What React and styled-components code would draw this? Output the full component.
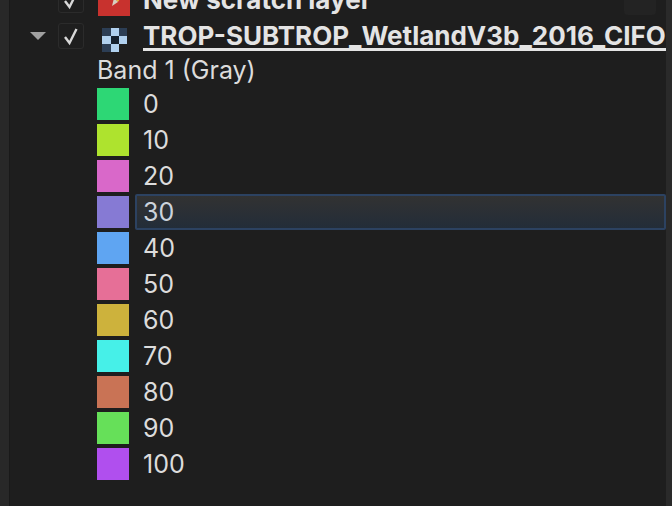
import React from 'react';
import styled, { createGlobalStyle } from 'styled-components';

const GlobalStyle = createGlobalStyle`
  html, body {
    margin: 0;
    padding: 0;
    background: #1e1e1e;
  }
`;

const Window = styled.div`
  width: 672px;
  height: 506px;
  display: flex;
  overflow: hidden;
  background: #1e1e1e;
  color: #e2e2e2;
  font-family: Inter, "Liberation Sans", sans-serif;
`;

const LeftEdge = styled.div`
  width: 9px;
  flex: none;
  background: #282828;
  border-right: 1px solid #191919;
`;

const RightEdge = styled.div`
  width: 6px;
  flex: none;
  background: #2a2a2a;
`;

const Tree = styled.div`
  flex: 1;
  min-width: 0;
  margin-top: -18px;
  overflow: hidden;
`;

const LayerRow = styled.div`
  height: 36px;
  display: flex;
  align-items: center;
  padding-left: 20px;
  position: relative;
`;

const Arrow = styled.div`
  width: 16px;
  height: 8px;
  flex: none;
  margin-right: 12px;
  background: ${(p) => (p.$show ? '#a0a0a0' : 'transparent')};
  clip-path: polygon(0 0, 100% 0, 50% 100%);
`;

const Check = styled.div`
  width: 26px;
  height: 26px;
  flex: none;
  box-sizing: border-box;
  border: 1px solid #2b2b2b;
  border-radius: 3px;
  display: flex;
  align-items: center;
  justify-content: center;
  margin-right: 14px;
`;

const IconSlot = styled.div`
  width: 32px;
  height: 32px;
  flex: none;
  margin-right: 13px;
`;

const LayerName = styled.div`
  font-size: 26px;
  font-weight: 700;
  white-space: nowrap;
  line-height: 32px;
  color: #e4e4e4;
  text-decoration: ${(p) => (p.$underline ? 'underline' : 'none')};
  text-decoration-thickness: 3px;
  text-underline-offset: 3px;
`;

const ToolButton = styled.div`
  position: absolute;
  top: 0;
  right: 10px;
  width: 32px;
  height: 33px;
  box-sizing: border-box;
  border-radius: 4px;
  background: #232323;
  display: flex;
  align-items: center;
  justify-content: center;
`;

const BandTitle = styled.div`
  height: 32px;
  line-height: 32px;
  margin-left: 87px;
  font-size: 25px;
  color: #dcdcdc;
`;

const Legend = styled.div`
  display: flex;
  flex-direction: column;
  margin-left: 87px;
`;

const LegendRow = styled.div`
  height: 36px;
  display: flex;
  align-items: center;
  gap: 6px;
`;

const Swatch = styled.div`
  width: 32px;
  height: 32px;
  flex: none;
  background: ${(p) => p.$color};
`;

const LegendLabel = styled.div`
  flex: 1;
  height: 36px;
  box-sizing: border-box;
  padding-left: 6px;
  display: flex;
  align-items: center;
  font-size: 25px;
  color: ${(p) => (p.$selected ? '#ccd3dc' : '#dcdcdc')};
  border: 2px solid ${(p) => (p.$selected ? '#2c4261' : 'transparent')};
  border-radius: 2px;
  background: ${(p) =>
    p.$selected ? 'linear-gradient(#323232, #232d39)' : 'transparent'};
`;

const CheckMark = () => (
  <svg width="20" height="20" viewBox="0 0 20 20" fill="none">
    <path d="M4 11 L8.5 17 L15.5 3" stroke="#d8d8d8" strokeWidth="2.4" />
  </svg>
);

const PencilIcon = () => (
  <svg width="32" height="32" viewBox="0 0 32 32">
    <rect width="32" height="32" fill="#c8322e" />
    <path d="M16 14 L22 2 L27 6 L20 18 Z" fill="#e8c53a" />
    <path d="M16 14 L20 18 L14 22 Z" fill="#d8d0c0" />
  </svg>
);

const RasterIcon = () => (
  <svg width="32" height="32" viewBox="0 0 32 32" shapeRendering="crispEdges">
    <rect x="4" y="8" width="9" height="8" fill="#2c3e55" />
    <rect x="13" y="8" width="8" height="8" fill="#b0d0ee" />
    <rect x="21" y="8" width="8" height="8" fill="#2c3e55" />
    <rect x="4" y="16" width="9" height="8" fill="#b0d0ee" />
    <rect x="13" y="16" width="8" height="8" fill="#16212e" />
    <rect x="21" y="16" width="8" height="8" fill="#b0d0ee" />
    <rect x="4" y="24" width="9" height="8" fill="#2c3e55" />
    <rect x="13" y="24" width="8" height="8" fill="#b0d0ee" />
  </svg>
);

const legend = [
  ['0', '#2dd775'],
  ['10', '#aee32e'],
  ['20', '#d968c9'],
  ['30', '#867ad4'],
  ['40', '#5fa5f2'],
  ['50', '#e66f97'],
  ['60', '#cdb23c'],
  ['70', '#46f0e8'],
  ['80', '#c97355'],
  ['90', '#66e059'],
  ['100', '#b04fee'],
];

const App = () => (
  <Window>
    <GlobalStyle />
    <LeftEdge />
    <Tree>
      <LayerRow>
        <Arrow />
        <Check><CheckMark /></Check>
        <IconSlot><PencilIcon /></IconSlot>
        <LayerName>New scratch layer</LayerName>
        <ToolButton />
      </LayerRow>
      <LayerRow>
        <Arrow $show />
        <Check><CheckMark /></Check>
        <IconSlot><RasterIcon /></IconSlot>
        <LayerName $underline>TROP-SUBTROP_WetlandV3b_2016_CIFOR</LayerName>
      </LayerRow>
      <BandTitle>Band 1 (Gray)</BandTitle>
      <Legend>
        {legend.map(([label, color]) => (
          <LegendRow key={label}>
            <Swatch $color={color} />
            <LegendLabel $selected={label === '30'}>{label}</LegendLabel>
          </LegendRow>
        ))}
      </Legend>
    </Tree>
    <RightEdge />
  </Window>
);

export default App;
